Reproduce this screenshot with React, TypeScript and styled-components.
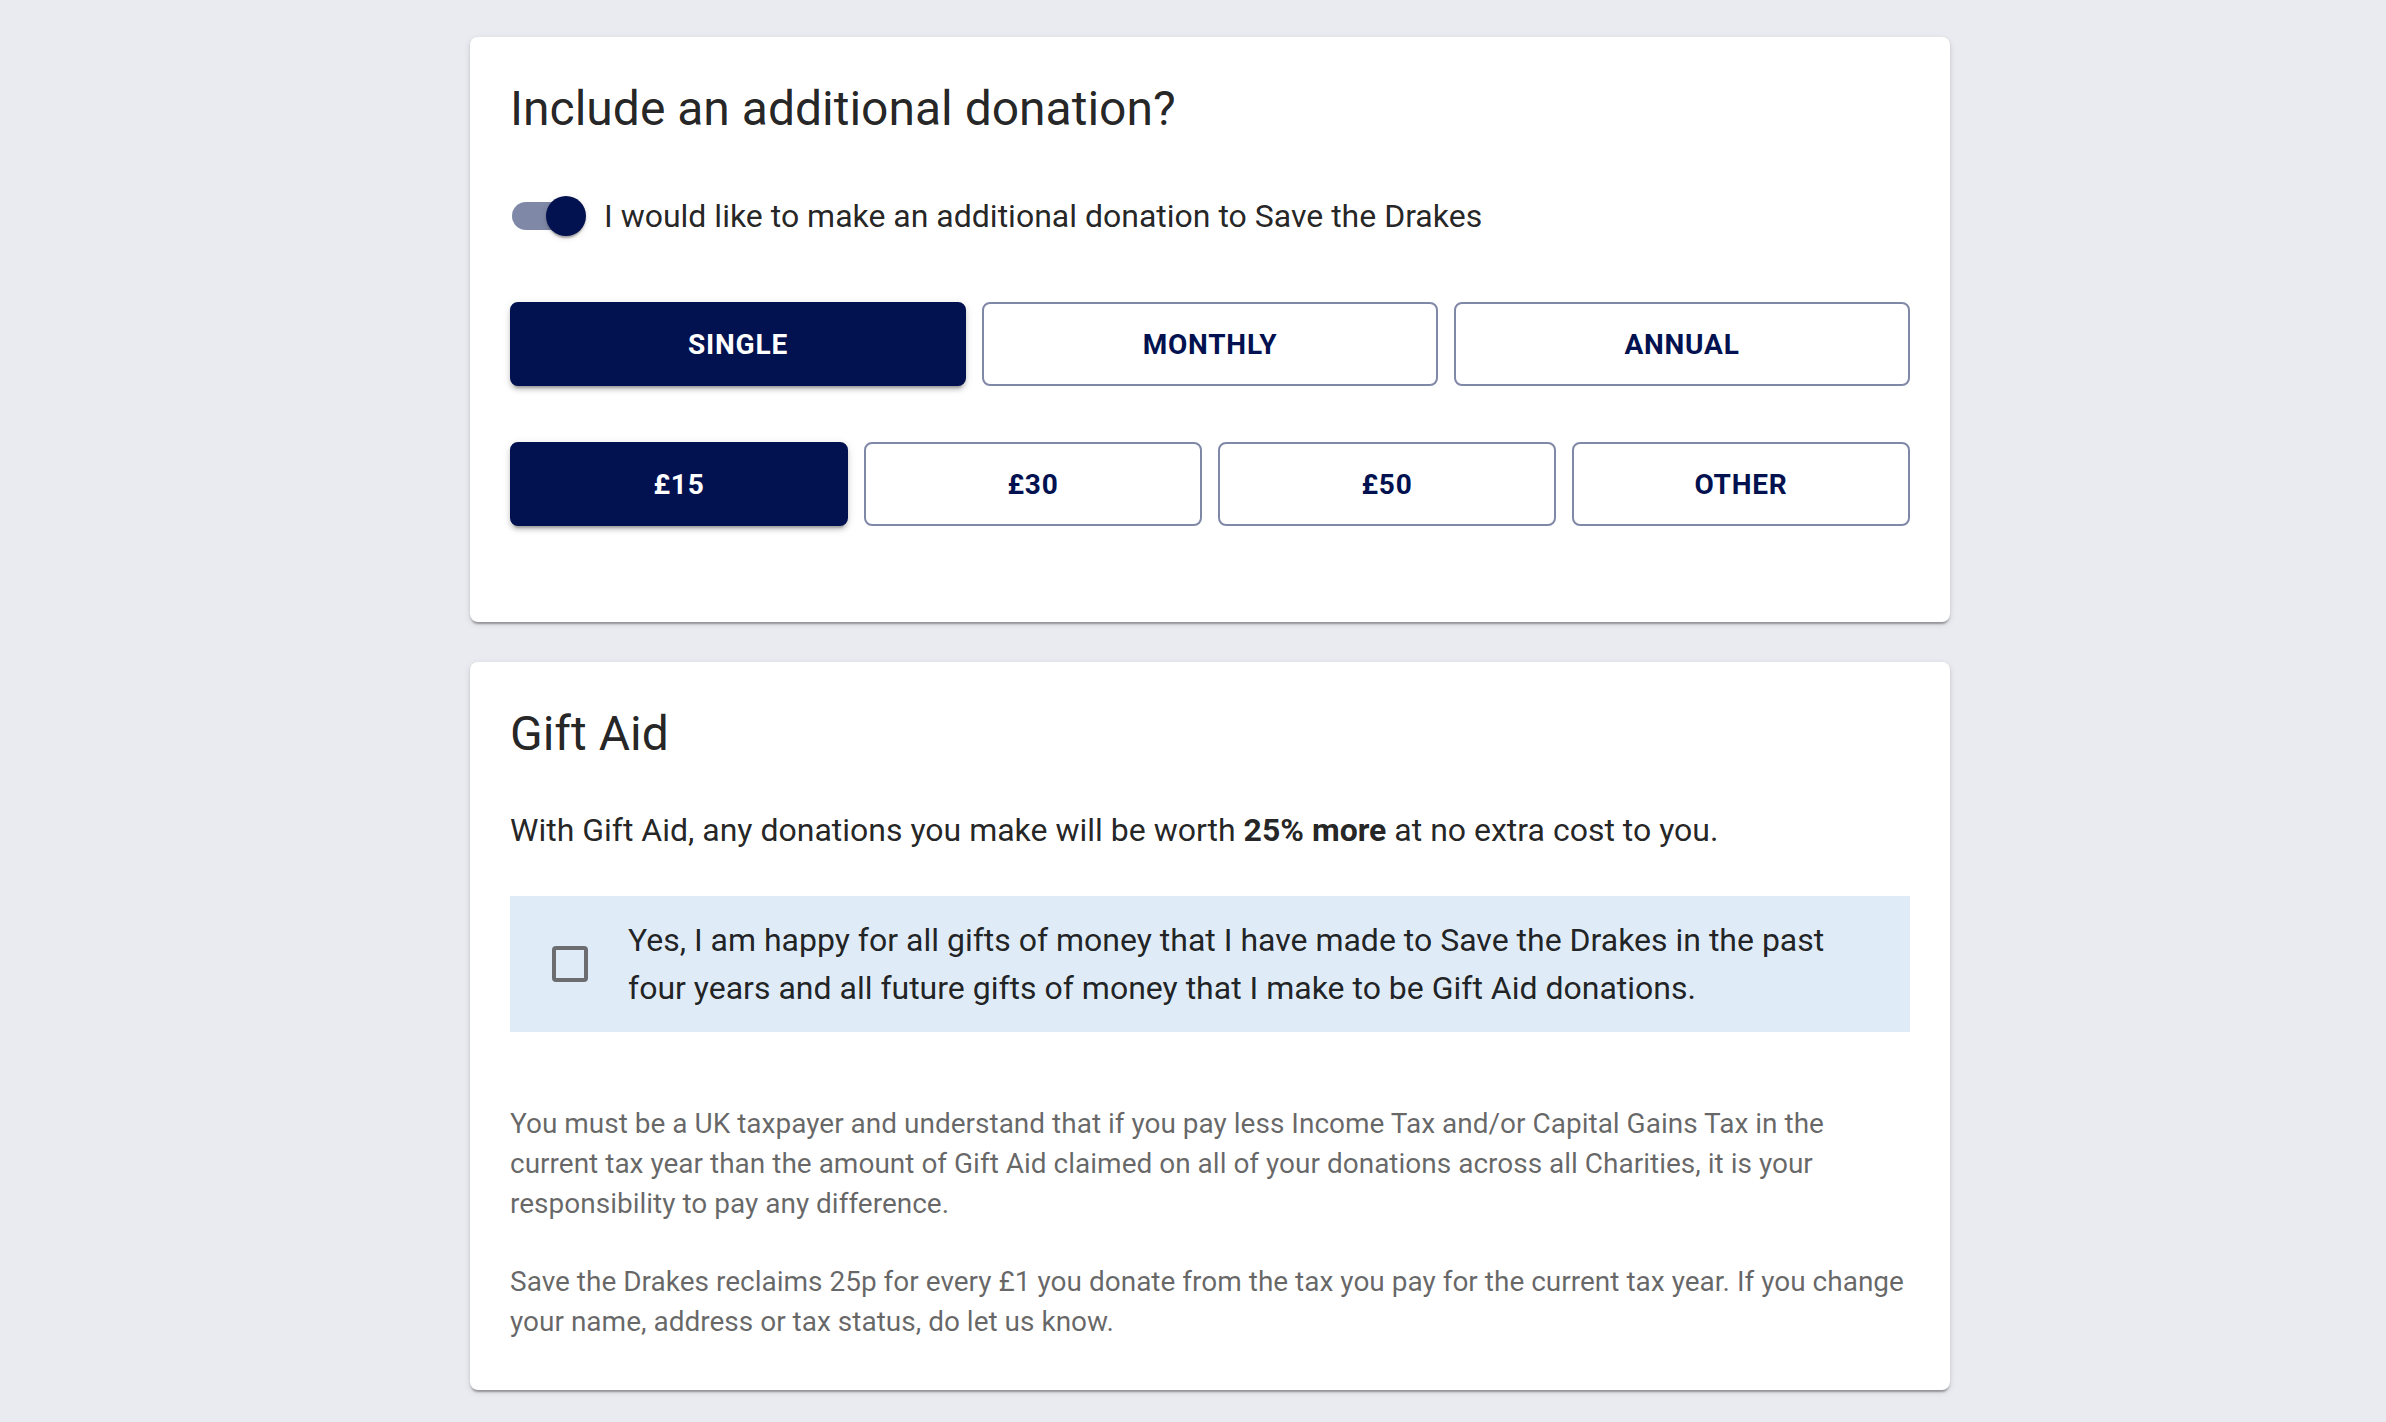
import React, { useState } from 'react';
import styled, { createGlobalStyle } from 'styled-components';

const NAVY = '#02114f';

const GlobalStyle = createGlobalStyle`
  html, body {
    margin: 0;
    padding: 0;
    background: #eaebf0;
  }
  body {
    font-family: Roboto, 'Noto Sans', 'Liberation Sans', sans-serif;
    color: rgba(0, 0, 0, 0.87);
    -webkit-font-smoothing: antialiased;
  }
  * {
    box-sizing: border-box;
  }
`;

const Page = styled.main`
  min-height: 1422px;
  padding: 37px 0 24px 470px;
  display: flex;
  flex-direction: column;
  gap: 40px;
`;

const Card = styled.section<{ $bottom: number }>`
  width: 1480px;
  background: #ffffff;
  border-radius: 8px;
  box-shadow: 0 4px 2px -2px rgba(0, 0, 0, 0.2), 0 2px 2px 0 rgba(0, 0, 0, 0.14),
    0 2px 6px 0 rgba(0, 0, 0, 0.12);
  padding: 40px 40px ${(p) => p.$bottom}px;
`;

const CardTitle = styled.h2`
  margin: 0 0 40px;
  font-size: 48px;
  font-weight: 400;
  line-height: 64px;
  color: rgba(0, 0, 0, 0.87);
`;

const ToggleRow = styled.label`
  display: flex;
  align-items: center;
  height: 70px;
  font-size: 32px;
  line-height: 48px;
  cursor: pointer;
`;

const SwitchRoot = styled.span`
  position: relative;
  display: flex;
  align-items: center;
  width: 116px;
  height: 70px;
  margin-left: -22px;
  flex-shrink: 0;
`;

const Track = styled.span<{ $on: boolean }>`
  margin-left: 24px;
  width: 68px;
  height: 28px;
  border-radius: 14px;
  background: ${(p) => (p.$on ? NAVY : '#000000')};
  opacity: ${(p) => (p.$on ? 0.5 : 0.38)};
`;

const Thumb = styled.span<{ $on: boolean }>`
  position: absolute;
  top: 15px;
  left: ${(p) => (p.$on ? 58 : 18)}px;
  width: 40px;
  height: 40px;
  border-radius: 50%;
  background: ${(p) => (p.$on ? NAVY : '#ffffff')};
  box-shadow: 0 4px 2px -2px rgba(0, 0, 0, 0.2), 0 2px 2px 0 rgba(0, 0, 0, 0.14),
    0 2px 6px 0 rgba(0, 0, 0, 0.12);
`;

const ButtonGrid = styled.div<{ $cols: number; $top: number; $bottom?: number }>`
  display: grid;
  grid-template-columns: repeat(${(p) => p.$cols}, 1fr);
  gap: 16px;
  margin-top: ${(p) => p.$top}px;
  margin-bottom: ${(p) => p.$bottom ?? 0}px;
`;

const ChoiceButton = styled.button<{ $active: boolean }>`
  height: 84px;
  border-radius: 8px;
  font-family: inherit;
  font-size: 28px;
  font-weight: 700;
  letter-spacing: 0.8px;
  text-transform: uppercase;
  cursor: pointer;
  border: 2px solid ${(p) => (p.$active ? NAVY : '#8088a7')};
  background: ${(p) => (p.$active ? NAVY : '#ffffff')};
  color: ${(p) => (p.$active ? '#ffffff' : NAVY)};
  box-shadow: ${(p) =>
    p.$active
      ? '0 6px 2px -4px rgba(0,0,0,0.2), 0 4px 4px 0 rgba(0,0,0,0.14), 0 2px 10px 0 rgba(0,0,0,0.12)'
      : 'none'};
`;

const Lead = styled.p`
  margin: 0 0 42px;
  font-size: 32px;
  line-height: 48px;

  strong {
    font-weight: 700;
  }
`;

const ConsentBox = styled.label`
  display: flex;
  align-items: center;
  gap: 40px;
  padding: 20px 50px 20px 42px;
  background: #dfebf6;
  font-size: 32px;
  line-height: 48px;
  cursor: pointer;
`;

const CheckSquare = styled.span<{ $checked: boolean }>`
  width: 36px;
  height: 36px;
  flex-shrink: 0;
  border-radius: 4px;
  border: 4px solid ${(p) => (p.$checked ? NAVY : '#6b6d70')};
  background: ${(p) => (p.$checked ? NAVY : 'transparent')};
`;

const Small = styled.p<{ $top: number }>`
  margin: ${(p) => p.$top}px 0 0;
  font-size: 28px;
  line-height: 40px;
  color: rgba(0, 0, 0, 0.6);
`;

const frequencies = ['Single', 'Monthly', 'Annual'];
const amounts = ['£15', '£30', '£50', 'Other'];

export default function App() {
  const [extra, setExtra] = useState(true);
  const [frequency, setFrequency] = useState('Single');
  const [amount, setAmount] = useState('£15');
  const [giftAid, setGiftAid] = useState(false);

  return (
    <>
      <GlobalStyle />
      <Page>
        <Card $bottom={40}>
          <CardTitle>Include an additional donation?</CardTitle>
          <ToggleRow onClick={() => setExtra((v) => !v)}>
            <SwitchRoot>
              <Track $on={extra} />
              <Thumb $on={extra} />
            </SwitchRoot>
            I would like to make an additional donation to Save the Drakes
          </ToggleRow>

          <ButtonGrid $cols={3} $top={51}>
            {frequencies.map((f) => (
              <ChoiceButton key={f} $active={frequency === f} onClick={() => setFrequency(f)}>
                {f}
              </ChoiceButton>
            ))}
          </ButtonGrid>

          <ButtonGrid $cols={4} $top={56} $bottom={56}>
            {amounts.map((a) => (
              <ChoiceButton key={a} $active={amount === a} onClick={() => setAmount(a)}>
                {a}
              </ChoiceButton>
            ))}
          </ButtonGrid>
        </Card>

        <Card $bottom={48}>
          <CardTitle>Gift Aid</CardTitle>
          <Lead>
            With Gift Aid, any donations you make will be worth <strong>25% more</strong> at no
            extra cost to you.
          </Lead>
          <ConsentBox onClick={() => setGiftAid((v) => !v)}>
            <CheckSquare $checked={giftAid} />
            <span>
              Yes, I am happy for all gifts of money that I have made to Save the Drakes in the past
              four years and all future gifts of money that I make to be Gift Aid donations.
            </span>
          </ConsentBox>
          <Small $top={72}>
            You must be a UK taxpayer and understand that if you pay less Income Tax and/or Capital
            Gains Tax in the current tax year than the amount of Gift Aid claimed on all of your
            donations across all Charities, it is your responsibility to pay any difference.
          </Small>
          <Small $top={38}>
            Save the Drakes reclaims 25p for every £1 you donate from the tax you pay for the
            current tax year. If you change your name, address or tax status, do let us know.
          </Small>
        </Card>
      </Page>
    </>
  );
}
